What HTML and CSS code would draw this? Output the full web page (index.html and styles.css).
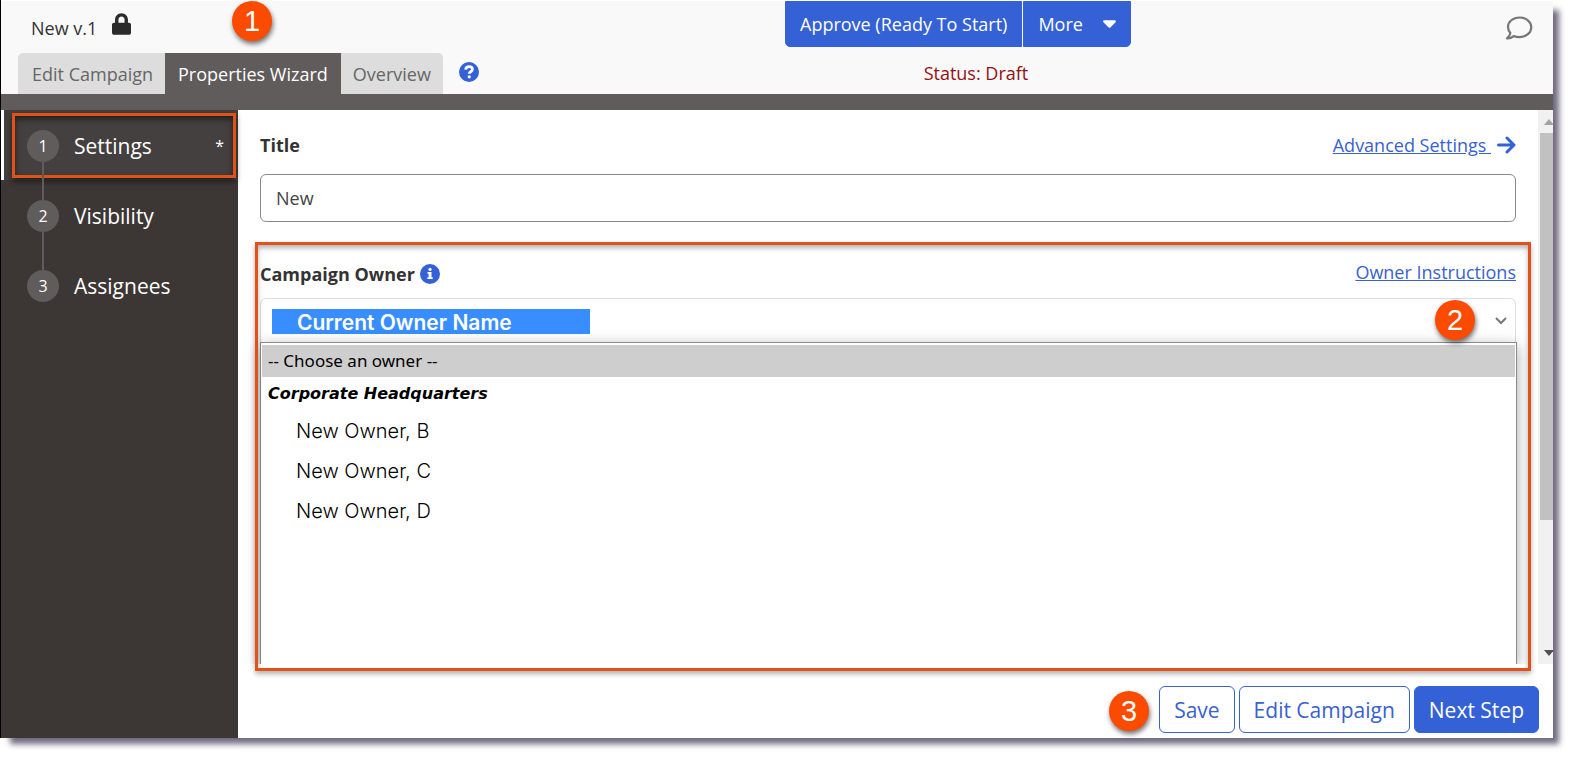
FILE: index.html
```html
<!DOCTYPE html>
<html lang="en">
<head>
<meta charset="utf-8">
<title>Properties Wizard</title>
<link rel="stylesheet" href="styles.css">
</head>
<body>
<div class="window">
  <header class="header">
    <div class="header-left">
      <div class="doc-title">
        <span>New v.1</span>
        <svg class="lock" viewBox="0 0 448 512" role="img" aria-label="Locked"><path d="M400 224h-24v-72C376 68 308 0 224 0S72 68 72 152v72H48c-27 0-48 21-48 48v192c0 27 21 48 48 48h352c27 0 48-21 48-48V272c0-27-21-48-48-48zm-104 0H152v-72c0-40 32-72 72-72s72 32 72 72z"/></svg>
        <span class="badge badge-one">1</span>
      </div>
      <nav class="tabs">
        <a class="tab tab-first" href="#edit">Edit Campaign</a>
        <a class="tab tab-active" href="#properties" aria-current="page">Properties Wizard</a>
        <a class="tab tab-last" href="#overview">Overview</a>
        <a class="help" href="#help" aria-label="Help"><svg class="round-icon" viewBox="0 0 20 20"><circle cx="10" cy="10" r="10"/><path class="mark" d="M6.600 7.600C6.900 5.500 8.200 4.600 10 4.600c2 0 3.400 1.100 3.400 2.800 0 2.300-3.200 2.300-3.200 4.300"/><circle class="mark-dot" cx="10.200" cy="14.800" r="1.600"/></svg></a>
      </nav>
    </div>
    <div class="header-center">
      <div class="button-group">
        <button class="btn btn-primary btn-approve" type="button">Approve (Ready To Start)</button>
        <button class="btn btn-primary btn-more" type="button">More <svg class="caret" viewBox="0 0 14 8"><path d="M1.500 0h11c1.200 0 1.800 1.200 1 2L8.200 7.400a1.700 1.700 0 0 1-2.400 0L.5 2C-.3 1.200.3 0 1.500 0z"/></svg></button>
      </div>
      <p class="status">Status: Draft</p>
    </div>
    <button class="chat" type="button" aria-label="Comments"><svg class="chat-icon" viewBox="0 0 28 24"><path d="M14.500 1.500C8 1.500 3 5.700 3 10.900c0 2.300.9 4.300 2.400 6C5.100 18.800 4 20.800 2 22.400c2.700.1 5-.8 6.700-2.300 1.800.7 3.700 1 5.800 1 6.500 0 11.800-4.400 11.800-9.900S21 1.500 14.500 1.500z"/></svg></button>
  </header>

  <div class="workspace">
    <nav class="sidebar">
      <a class="step step-active" href="#settings"><span class="step-number">1</span><span class="step-name">Settings</span><span class="step-required">*</span></a>
      <a class="step" href="#visibility"><span class="step-number">2</span><span class="step-name">Visibility</span></a>
      <a class="step" href="#assignees"><span class="step-number">3</span><span class="step-name">Assignees</span></a>
    </nav>

    <main class="content">
      <div class="scroll-area">
        <form class="form">
          <div class="label-row">
            <label class="label" for="title">Title</label>
            <a class="advanced" href="#advanced"><span class="link">Advanced Settings&nbsp;</span><svg class="arrow" viewBox="0 0 19 18"><path d="M1.500 9h15M10 2l7 7-7 7"/></svg></a>
          </div>
          <input class="text-input" id="title" type="text" value="New">

          <section class="owner">
            <div class="label-row">
              <label class="label" for="owner">Campaign Owner</label>
              <svg class="round-icon info" viewBox="0 0 20 20" role="img" aria-label="Information"><circle cx="10" cy="10" r="10"/><path class="letter" d="M7.500 8h4v5.200h1.200V15H7.400v-1.800h1.200V9.800H7.500z"/><circle class="mark-dot" cx="10" cy="5.400" r="1.600"/></svg>
              <a class="link owner-link" href="#instructions">Owner Instructions</a>
            </div>
            <div class="select-wrap">
              <select class="select" id="owner"><option>Current Owner Name</option></select>
              <svg class="chevron" viewBox="0 0 12 8"><path d="M1 1l5 5 5-5"/></svg>
              <span class="badge badge-two">2</span>
            </div>
            <ul class="options" role="listbox" aria-label="Campaign Owner">
              <li class="option option-current" role="option" aria-selected="true">-- Choose an owner --</li>
              <li class="option option-group" role="presentation">Corporate Headquarters</li>
              <li class="option option-person" role="option">New Owner, B</li>
              <li class="option option-person" role="option">New Owner, C</li>
              <li class="option option-person" role="option">New Owner, D</li>
            </ul>
          </section>
        </form>
        <div class="scrollbar" aria-hidden="true">
          <svg class="scroll-arrow" viewBox="0 0 9 6"><path d="M0 6l5-6 5 6z"/></svg>
          <div class="scroll-track"><div class="scroll-thumb"></div></div>
          <svg class="scroll-arrow scroll-down" viewBox="0 0 9 6"><path d="M0 0h10L5 6z"/></svg>
        </div>
      </div>
      <footer class="footer">
        <span class="badge">3</span>
        <button class="btn btn-outline" type="button">Save</button>
        <button class="btn btn-outline" type="button">Edit Campaign</button>
        <button class="btn btn-primary btn-next" type="button">Next Step</button>
      </footer>
    </main>
  </div>
</div>
</body>
</html>
```
FILE: styles.css
```css
* {
  box-sizing: border-box;
}

body {
  margin: 0;
  min-height: 100vh;
  padding: 0 20px 20px 0;
  display: flex;
  background: #fff;
  color: #333;
  font-family: "Open Sans", "Noto Sans", sans-serif;
  font-size: 18px;
  line-height: 24px;
}

a {
  color: inherit;
  text-decoration: none;
}

button,
input,
select {
  font: inherit;
  color: inherit;
}

.window {
  flex: 1;
  min-width: 0;
  display: flex;
  flex-direction: column;
  border-left: 1px solid #000;
  box-shadow: 8px 8px 6px -2px #6f6a7e;
}

/* Header */
.header {
  display: flex;
  background: #f9f9f9;
  border-top: 1px solid #fff;
  border-bottom: 16px solid #605c5b;
}

.header-left {
  flex: 0 0 784px;
  display: flex;
  flex-direction: column;
}

.doc-title {
  position: relative;
  display: flex;
  align-items: center;
  gap: 15px;
  height: 52px;
  padding: 2px 0 0 30px;
}

.lock {
  width: 19px;
  height: 22px;
  margin-bottom: 8px;
  fill: #2b2b2b;
}

.badge {
  display: flex;
  align-items: center;
  justify-content: center;
  width: 40px;
  height: 40px;
  border-radius: 50%;
  background: #fa4b00;
  color: #fff;
  box-shadow: 1px 3px 5px rgba(0, 0, 0, 0.55);
  font-family: "Liberation Sans", Arial, sans-serif;
  font-size: 29px;
}

.badge-one {
  position: absolute;
  top: 0;
  left: 231px;
}

.tabs {
  display: flex;
  align-items: stretch;
  height: 41px;
  padding-left: 17px;
}

.tab {
  padding: 9px 12px 0;
  background: #ddd;
  color: #666;
}

.tab-first {
  padding-left: 14px;
  border-top-left-radius: 5px;
}

.tab-last {
  border-top-right-radius: 5px;
}

.tab-active {
  padding: 9px 13px 0;
  background: #605c5b;
  color: #fff;
}

.help {
  padding: 9px 16px 0;
}

.round-icon {
  display: block;
  width: 20px;
  height: 20px;
  fill: #3461d5;
}

.mark {
  fill: none;
  stroke: #fff;
  stroke-width: 2.8;
}

.mark-dot,
.letter {
  fill: #fff;
}

.header-center {
  display: flex;
  flex-direction: column;
  gap: 14px;
}

.button-group {
  display: flex;
  gap: 1px;
}

.btn {
  height: 47px;
  padding: 0 14px;
  border: 1px solid #3461d5;
  border-radius: 6px;
  font-size: 21px;
  white-space: nowrap;
}

.btn-primary {
  background: #3461d5;
  color: #fff;
}

.btn-approve,
.btn-more {
  height: 46px;
  font-size: 18px;
}

.btn-approve {
  border-radius: 0 0 0 5px;
}

.btn-more {
  display: flex;
  align-items: center;
  gap: 20px;
  border-radius: 0 0 5px 0;
}

.caret {
  width: 13px;
  height: 8px;
  fill: #fff;
}

.status {
  margin: 0;
  padding-left: 36px;
  color: #931111;
  text-align: center;
}

.chat {
  align-self: flex-start;
  margin: 15px 20px 0 auto;
  padding: 0;
  border: 0;
  background: none;
}

.chat-icon {
  display: block;
  width: 28px;
  height: 24px;
  fill: none;
  stroke: #777;
  stroke-width: 2.2;
  stroke-linejoin: round;
}

/* Sidebar */
.workspace {
  flex: 1;
  display: flex;
}

.sidebar {
  flex: 0 0 237px;
  background: #3c3635;
}

.step {
  position: relative;
  display: flex;
  align-items: center;
  gap: 15px;
  height: 70px;
  padding: 2px 14px 0 26px;
  color: #fff;
  font-size: 21px;
}

.step-active {
  background: #44403f;
  box-shadow: inset 3px 0 #fff;
}

.step-active::before {
  content: "";
  position: absolute;
  inset: 3px 2px 2px 11px;
  border: 3px solid #e0521a;
  box-shadow: 0 3px 6px rgba(0, 0, 0, 0.55), inset 0 3px 6px rgba(0, 0, 0, 0.55);
}

.step:not(:last-child)::after {
  content: "";
  position: absolute;
  top: 52px;
  left: 41px;
  width: 2px;
  height: 38px;
  background: #605c5b;
}

.step-number {
  position: relative;
  display: flex;
  align-items: center;
  justify-content: center;
  width: 32px;
  height: 32px;
  border-radius: 50%;
  background: #605c5b;
  font-size: 16px;
}

.step-required {
  position: relative;
  margin-left: auto;
  font-size: 16px;
}

/* Form */
.content {
  flex: 1;
  min-width: 0;
  display: flex;
  flex-direction: column;
}

.scroll-area {
  flex: 1;
  display: flex;
}

.form {
  flex: 1;
  display: flex;
  flex-direction: column;
  padding: 23px 22px 0;
}

.label-row {
  display: flex;
  align-items: center;
}

.label {
  font-weight: 700;
}

.link {
  color: #3a61cf;
  text-decoration: underline;
}

.advanced {
  display: flex;
  align-items: center;
  gap: 6px;
  margin-left: auto;
}

.arrow {
  width: 19px;
  height: 18px;
  fill: none;
  stroke: #3461d5;
  stroke-width: 3;
  stroke-linecap: round;
  stroke-linejoin: round;
}

.text-input {
  width: 100%;
  height: 48px;
  margin-top: 17px;
  padding: 0 15px;
  border: 1px solid #888;
  border-radius: 6px;
  background: #fff;
  color: #444;
}

.owner {
  position: relative;
  flex: 1;
  display: flex;
  flex-direction: column;
  margin-top: 20px;
  padding-top: 18px;
}

/* Highlight frame round the owner section */
.owner::after {
  content: "";
  position: absolute;
  inset: 0 -15px -7px -5px;
  border: 3px solid #e0521a;
  box-shadow: 0 3px 5px rgba(0, 0, 0, 0.3), inset 0 3px 5px rgba(0, 0, 0, 0.3);
  pointer-events: none;
}

.info {
  margin-left: 5px;
}

.owner-link {
  margin-left: auto;
  padding-bottom: 4px;
}

.select-wrap {
  position: relative;
  margin-top: 10px;
}

.select {
  display: block;
  width: 100%;
  height: 48px;
  padding: 1px 36px 0;
  border: 1px solid #ddd;
  border-radius: 6px;
  appearance: none;
  background: linear-gradient(#388eff, #388eff) 11px 10px / 318px 25px no-repeat #fff;
  color: #fff;
  font-family: Inter, Roboto, sans-serif;
  font-size: 21px;
  font-weight: 600;
}

.chevron {
  position: absolute;
  top: 19px;
  right: 9px;
  width: 12px;
  height: 8px;
  fill: none;
  stroke: #777;
  stroke-width: 2;
}

.badge-two {
  position: absolute;
  top: 2px;
  right: 41px;
  z-index: 1;
}

.options {
  position: relative;
  flex: 1;
  margin: -4px -1px 0 0;
  padding: 2px 1px 0;
  border: 1px solid #8a8a8e;
  border-bottom: 0;
  background: #fff;
  box-shadow: 0 4px 14px rgba(0, 0, 0, 0.35);
  clip-path: inset(-20px -20px 0 -20px);
  color: #000;
  list-style: none;
}

.option {
  padding: 4px 6px;
  font-family: "Noto Sans", sans-serif;
  font-size: 17px;
}

.option-current {
  background: #cecece;
}

.option-group {
  padding: 5px 6px;
  font-family: "DejaVu Sans", Verdana, sans-serif;
  font-size: 16px;
  font-weight: 700;
  font-style: italic;
}

.option-person {
  padding: 8px 34px;
  font-family: Inter, Roboto, sans-serif;
  font-size: 20px;
  font-weight: 300;
}

/* Scrollbar */
.scrollbar {
  flex: 0 0 15px;
  display: flex;
  flex-direction: column;
  align-items: flex-end;
  padding: 9px 0 8px;
  background: #f1f1f1;
}

.scroll-arrow {
  width: 9px;
  height: 6px;
  fill: #a3a3a3;
}

.scroll-down {
  fill: #505050;
}

.scroll-track {
  flex: 1;
  align-self: stretch;
  padding: 8px 0 8px 2px;
}

.scroll-thumb {
  height: 76%;
  background: #c1c1c1;
}

/* Footer */
.footer {
  display: flex;
  align-items: center;
  justify-content: flex-end;
  gap: 4px;
  padding: 22px 14px 5px;
}

.footer .badge {
  margin: 3px 6px 0 0;
}

.btn-outline {
  background: #fff;
  color: #3a61cf;
}
```
